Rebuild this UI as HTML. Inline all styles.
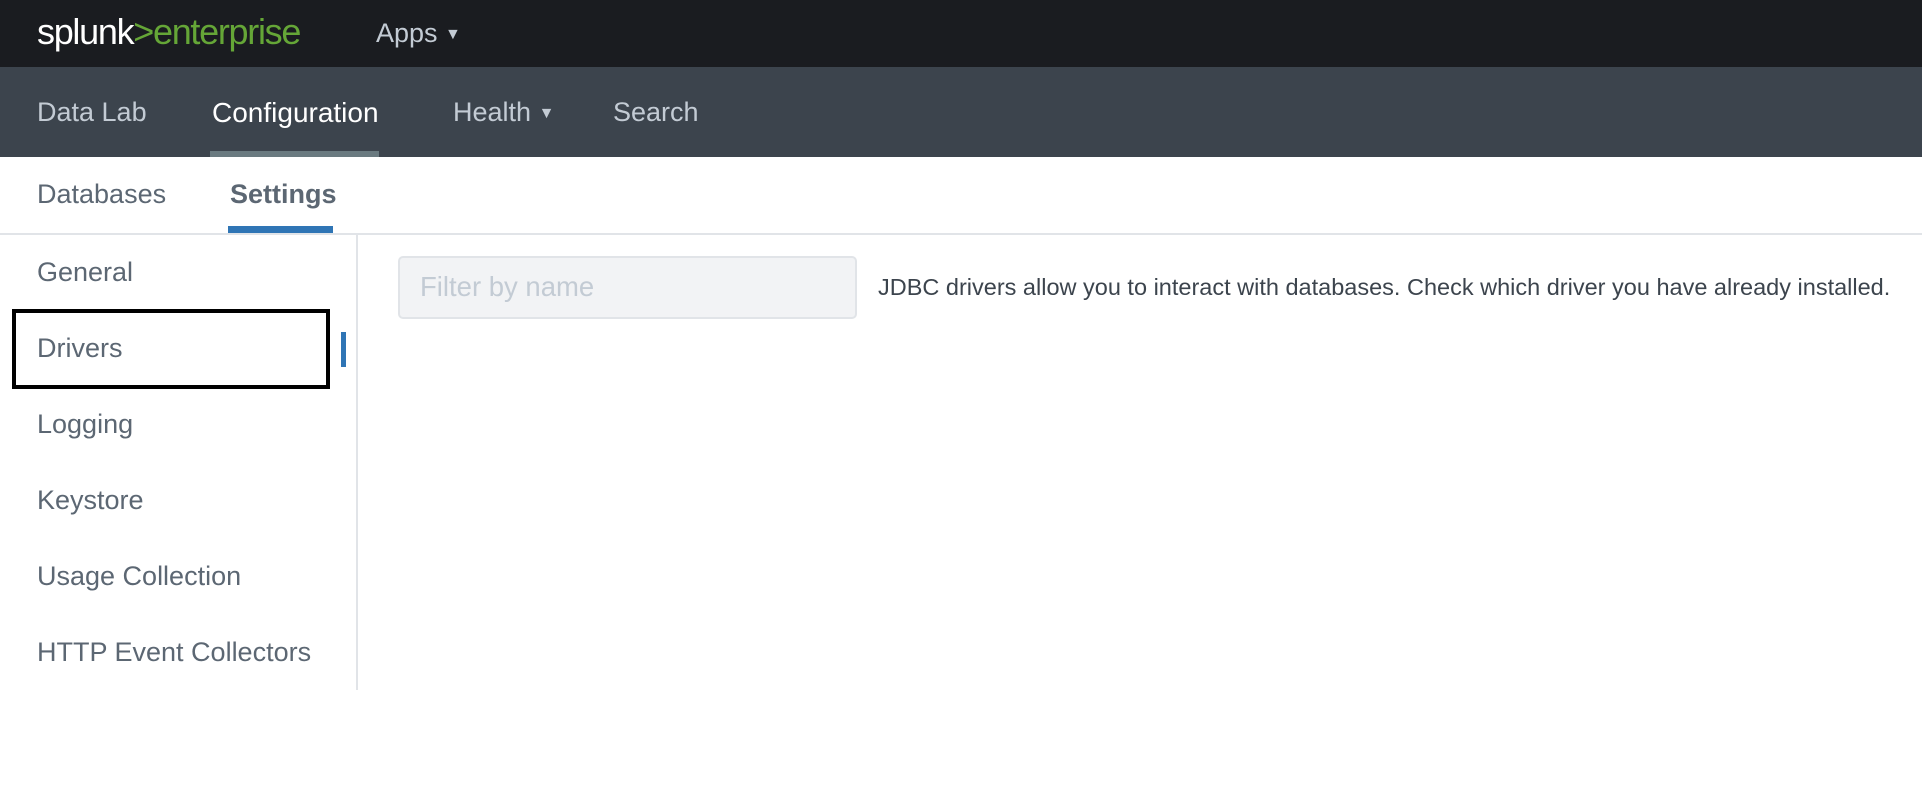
<!DOCTYPE html>
<html><head><meta charset="utf-8"><style>
*{margin:0;padding:0;box-sizing:border-box}
body{width:1922px;height:804px;background:#fff;font-family:"Liberation Sans",sans-serif;position:relative;overflow:hidden}
.a{position:absolute;white-space:nowrap}
#top{position:absolute;left:0;top:0;width:1922px;height:67px;background:#1a1c20}
#nav{position:absolute;left:0;top:67px;width:1922px;height:90px;background:#3c444d}
.n{color:#c3cbd4;font-size:27px;top:30px}
.s{color:#5c6773;font-size:27px}
</style></head><body>
<div id="top">
  <div class="a" style="left:37px;top:11px;font-size:36px;letter-spacing:-1.3px;color:#fff">splunk<span style="color:#65a637">&gt;enterprise</span></div>
  <div class="a" style="left:376px;top:18px;font-size:27px;color:#c3cbd4">Apps <span style="font-size:16px;position:relative;top:-3px">&#9660;</span></div>
</div>
<div id="nav">
  <div class="a n" style="left:37px">Data Lab</div>
  <div class="a n" style="left:212px;color:#fff;font-size:28px">Configuration</div>
  <div class="a n" style="left:453px">Health <span style="font-size:16px;position:relative;top:-3px">&#9660;</span></div>
  <div class="a n" style="left:613px">Search</div>
  <div class="a" style="left:210px;top:84px;width:169px;height:6px;background:#6a7a80"></div>
</div>
<div class="a s" style="left:37px;top:179px">Databases</div>
<div class="a s" style="left:230px;top:179px;font-weight:bold">Settings</div>
<div class="a" style="left:228px;top:226px;width:105px;height:7px;background:#2f75b5"></div>
<div class="a" style="left:0;top:233px;width:1922px;height:2px;background:#e1e4e8"></div>
<div class="a" style="left:356px;top:235px;width:2px;height:455px;background:#e1e4e8"></div>
<div class="a s" style="left:37px;top:257px">General</div>
<div class="a s" style="left:37px;top:333px">Drivers</div>
<div class="a s" style="left:37px;top:409px">Logging</div>
<div class="a s" style="left:37px;top:485px">Keystore</div>
<div class="a s" style="left:37px;top:561px">Usage Collection</div>
<div class="a s" style="left:37px;top:637px">HTTP Event Collectors</div>
<div class="a" style="left:12px;top:309px;width:318px;height:80px;border:4px solid #000"></div>
<div class="a" style="left:341px;top:332px;width:5px;height:35px;background:#2f75b5"></div>
<div class="a" style="left:398px;top:256px;width:459px;height:63px;background:#f2f3f5;border:2px solid #e1e4e8;border-radius:5px"></div>
<div class="a" style="left:420px;top:271px;font-size:27.5px;color:#c3cbd4">Filter by name</div>
<div class="a" style="left:878px;top:274px;font-size:23.5px;color:#3c444d">JDBC drivers allow you to interact with databases. Check which driver you have already installed.</div>
</body></html>
